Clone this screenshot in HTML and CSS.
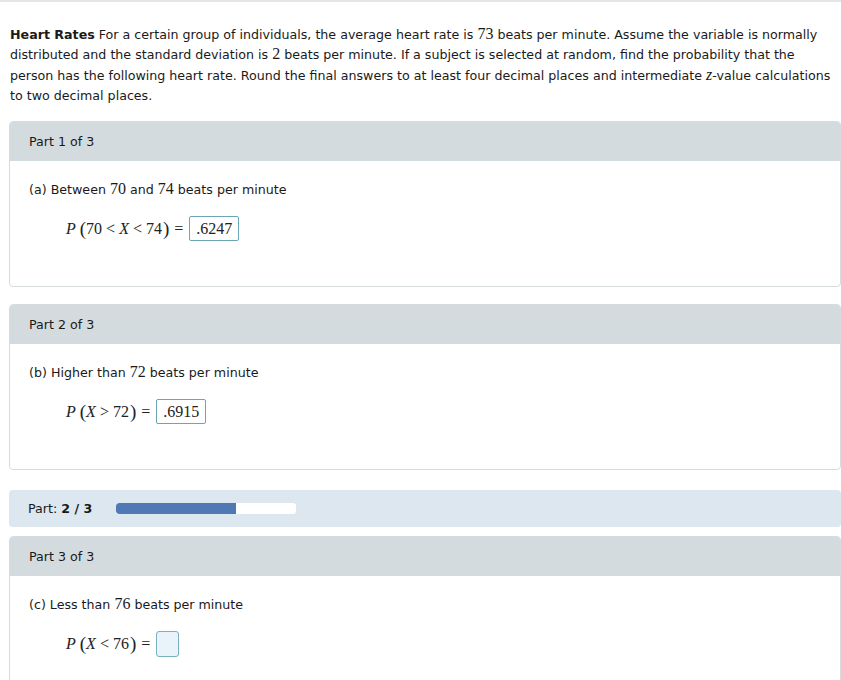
FILE: index.html
```html
<!DOCTYPE html>
<html>
<head>
<meta charset="utf-8">
<link rel="stylesheet" href="styles.css">
</head>
<body>
<div class="page">
  <p class="intro"><b>Heart Rates</b> For a certain group of individuals, the average heart rate is <span class="num">73</span> beats per minute. Assume the variable is normally distributed and the standard deviation is <span class="num">2</span> beats per minute. If a subject is selected at random, find the probability that the person has the following heart rate. Round the final answers to at least four decimal places and intermediate <span class="var">z</span>-value calculations to two decimal places.</p>

  <section class="panel p1">
    <div class="panel-head">Part 1 of 3</div>
    <div class="panel-body">
      <div class="question">(a) Between <span class="num">70</span> and <span class="num">74</span> beats per minute</div>
      <div class="math"><span class="it">P</span><span class="paren lp">(</span>70<span class="op">&lt;</span><span class="it">X</span><span class="op">&lt;</span>74<span class="paren rp">)</span><span class="eq">=</span><span class="box">.6247</span></div>
    </div>
  </section>

  <section class="panel p2">
    <div class="panel-head">Part 2 of 3</div>
    <div class="panel-body">
      <div class="question">(b) Higher than <span class="num">72</span> beats per minute</div>
      <div class="math"><span class="it">P</span><span class="paren lp">(</span><span class="it">X</span><span class="op">&gt;</span>72<span class="paren rp">)</span><span class="eq">=</span><span class="box">.6915</span></div>
    </div>
  </section>

  <div class="progress">
    <span class="plabel">Part: <b>2 / 3</b></span>
    <div class="bar"><div class="fill"></div></div>
  </div>

  <section class="panel p3">
    <div class="panel-head">Part 3 of 3</div>
    <div class="panel-body">
      <div class="question">(c) Less than <span class="num">76</span> beats per minute</div>
      <div class="math"><span class="it">P</span><span class="paren lp">(</span><span class="it">X</span><span class="op">&lt;</span>76<span class="paren rp">)</span><span class="eq">=</span><span class="box empty"></span></div>
    </div>
  </section>
</div>
</body>
</html>
```

FILE: styles.css
```css
html, body {
  margin: 0;
  padding: 0;
  background: #ffffff;
}
body {
  font-family: "DejaVu Sans", Verdana, sans-serif;
  font-size: 12.65px;
  color: #1a1a1a;
  overflow: hidden;
}
.page {
  border-top: 2px solid #e2e6e8;
  padding: 0 0 0 9px;
  width: 832px;
}
.intro {
  margin: 0;
  padding: 23px 0 0 1px;
  line-height: 20.3px;
}
.num {
  font-family: "Liberation Serif", "Times New Roman", serif;
  font-size: 16px;
  line-height: 1;
}
.var {
  font-family: "Liberation Serif", "Times New Roman", serif;
  font-size: 16px;
  font-style: italic;
  line-height: 1;
}
.panel {
  border: 1px solid #d6dcde;
  border-radius: 4px;
  overflow: hidden;
}
.p1 { margin-top: 15px; }
.p2 { margin-top: 17px; }
.p3 { margin-top: 9px; }
.panel-head {
  background: #d3dbde;
  height: 39px;
  line-height: 39px;
  padding-left: 19px;
}
.panel-body {
  padding: 19px 19px 45px;
}
.question {
  line-height: 20px;
}
.math {
  margin-top: 16px;
  padding-left: 37px;
  display: flex;
  align-items: center;
  height: 25px;
  font-family: "Liberation Serif", "Times New Roman", serif;
  font-size: 16px;
  color: #222;
}
.it { font-style: italic; }
.paren {
  font-size: 19px;
}
.lp { margin: 0 0 0 4px; }
.rp { margin: 0 0 0 1px; }
.op { margin: 0 4px; }
.eq { margin: 0 6px 0 5px; }
.box {
  display: inline-block;
  box-sizing: border-box;
  height: 25px;
  min-width: 50px;
  padding: 0 6px;
  line-height: 23px;
  border: 1px solid #6aa6b5;
  border-radius: 2px;
  background: #ffffff;
}
.box.empty {
  min-width: 23px;
  width: 23px;
  height: 26px;
  background: #e8f4f9;
  border-color: #79b0bf;
  border-radius: 3px;
}
.progress {
  margin-top: 20px;
  background: #dce7f0;
  border-radius: 4px;
  height: 37px;
  display: flex;
  align-items: center;
  padding-left: 19px;
}
.plabel {
  width: 88px;
}
.plabel b {
  font-weight: bold;
}
.bar {
  width: 180px;
  height: 11px;
  background: #ffffff;
  border-radius: 3px;
  overflow: hidden;
}
.fill {
  width: 120px;
  height: 100%;
  background: #5078b4;
  border-radius: 3px 0 0 3px;
}
```
